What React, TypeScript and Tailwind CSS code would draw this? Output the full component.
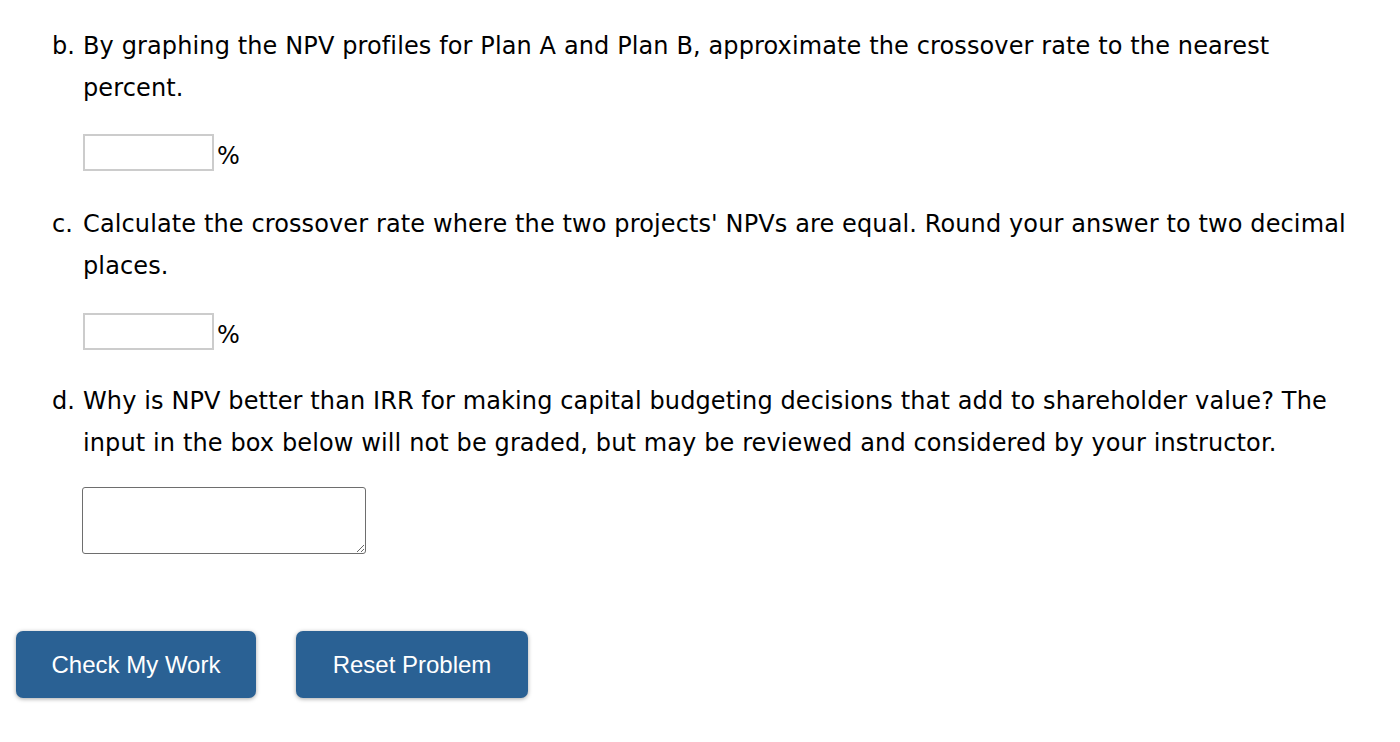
import React from "react";

const font = "font-['DejaVu_Sans',Verdana,sans-serif]";

function Question({ label, children }: { label: string; children: React.ReactNode }) {
  return (
    <div className="flex">
      <span className="w-[31px] shrink-0">{label}</span>
      <p className="w-[1290px]">{children}</p>
    </div>
  );
}

function PercentInput() {
  return (
    <div className="flex h-[37px] items-center pl-[31px]">
      <input type="text" className="h-[37px] w-[131px] border-2 border-[#cccccc] bg-white outline-none" />
      <span className="ml-[3px] pt-[6px] leading-none">%</span>
    </div>
  );
}

export default function App() {
  return (
    <div className={`min-h-[742px] bg-white text-black ${font} text-[24px] leading-[42px] tracking-[0.12px]`}>
      <div className="pl-[52px] pt-[25px]">
        <Question label="b.">
          By graphing the NPV profiles for Plan A and Plan B, approximate the crossover rate to the nearest
          percent.
        </Question>
        <div className="mt-[25px]">
          <PercentInput />
        </div>
        <div className="mt-[32px]">
          <Question label="c.">
            Calculate the crossover rate where the two projects' NPVs are equal. Round your answer to two decimal
            places.
          </Question>
        </div>
        <div className="mt-[26px]">
          <PercentInput />
        </div>
        <div className="mt-[30px]">
          <Question label="d.">
            Why is NPV better than IRR for making capital budgeting decisions that add to shareholder value? The
            input in the box below will not be graded, but may be reviewed and considered by your instructor.
          </Question>
        </div>
        <div className="mt-[23px] pl-[30px]">
          <textarea className="block h-[67px] w-[284px] rounded-[3px] border-[1.5px] border-[#6e6e6e] bg-white outline-none" />
        </div>
      </div>
      <div className="mt-[77px] flex gap-10 pl-4 font-['Liberation_Sans',Arial,sans-serif] text-[24px] leading-none tracking-normal">
        <button className="h-[67px] w-[240px] rounded-[7px] bg-[#2a6194] text-white shadow-[0_1px_4px_rgba(0,0,0,0.35)]">
          Check My Work
        </button>
        <button className="h-[67px] w-[232px] rounded-[7px] bg-[#2a6194] text-white shadow-[0_1px_4px_rgba(0,0,0,0.35)]">
          Reset Problem
        </button>
      </div>
    </div>
  );
}
